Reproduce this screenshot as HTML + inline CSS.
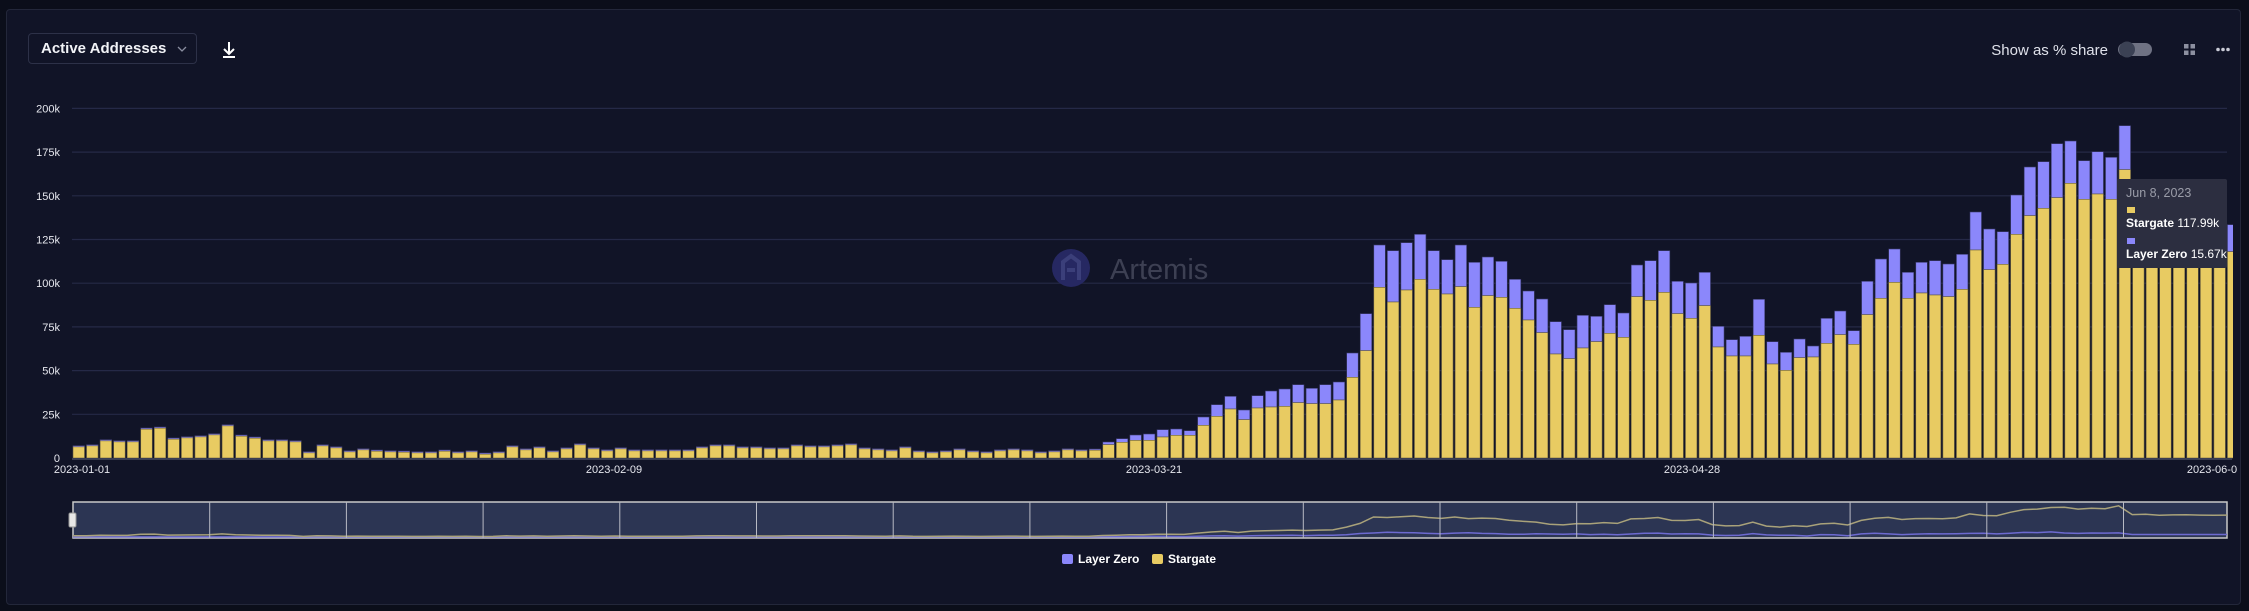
<!DOCTYPE html>
<html><head><meta charset="utf-8">
<style>
html,body{margin:0;padding:0;background:#0b0e1a;width:2249px;height:611px;overflow:hidden;font-family:"Liberation Sans",sans-serif;}
#panel{position:absolute;left:6px;top:9px;width:2233px;height:594px;background:#111427;border:1px solid #23273a;border-radius:4px;}
.dd{position:absolute;left:28px;top:33px;width:169px;height:31px;border:1px solid #2d3148;border-radius:4px;box-sizing:border-box;}
.dd span{position:absolute;left:12px;top:6px;color:#f2f3f7;font-size:15px;font-weight:bold;}
svg{position:absolute;left:0;top:0;}
</style></head><body>
<div id="panel"></div>
<div class="dd"><span>Active Addresses</span></div>
<svg id="s" width="2249" height="611" xmlns="http://www.w3.org/2000/svg">
<path d="M178 47 L182 51 L186 47" stroke="#8a8ea0" stroke-width="1.3" fill="none"/>
<path d="M229 42 V54 M224 49 L229 54 L234 49" stroke="#fff" stroke-width="2" fill="none"/>
<rect x="223" y="56" width="12" height="2" fill="#fff"/>
<text x="2108" y="55" fill="#dfe1ea" font-size="15" text-anchor="end" font-family="Liberation Sans, sans-serif">Show as % share</text>
<rect x="2118" y="43" width="34" height="13" rx="6.5" fill="#6f7283"/>
<circle cx="2127" cy="49.5" r="8" fill="#3b4154"/>
<g fill="#8d90a0"><rect x="2184" y="44" width="4.5" height="4.5"/><rect x="2190.5" y="44" width="4.5" height="4.5"/><rect x="2184" y="50.5" width="4.5" height="4.5"/><rect x="2190.5" y="50.5" width="4.5" height="4.5"/></g>
<g fill="#c9cbd6"><circle cx="2218" cy="49.5" r="1.8"/><circle cx="2223" cy="49.5" r="1.8"/><circle cx="2228" cy="49.5" r="1.8"/></g>
<g id="grid"></g>
<circle cx="1071" cy="268" r="19" fill="#262862"/>
<path d="M1063 280 V262 L1071 256 L1079 262 V280 M1067 270 H1075" stroke="#3b3f7a" stroke-width="4" fill="none"/>
<text x="1110" y="279" fill="#3d4053" font-size="29" font-family="Liberation Sans, sans-serif">Artemis</text>
<g id="bars"></g>
<g id="axes"></g>
<rect x="73" y="502" width="2154" height="36" fill="#2c3553" stroke="#c9c9c9" stroke-width="1.5"/>
<g id="nav"></g>
<rect x="69" y="513" width="7" height="14" rx="1.5" fill="#e8e8e8" stroke="#999"/>
<rect x="1062" y="554" width="11" height="10" rx="2" fill="#8b87fb"/>
<text x="1078" y="563" fill="#fff" font-size="12" font-weight="bold" font-family="Liberation Sans, sans-serif">Layer Zero</text>
<rect x="1152" y="554" width="11" height="10" rx="2" fill="#e8cb62"/>
<text x="1168" y="563" fill="#fff" font-size="12" font-weight="bold" font-family="Liberation Sans, sans-serif">Stargate</text>
<rect x="2117" y="179" width="110" height="89" rx="2" fill="#2c2e40"/>
<text x="2126" y="197" fill="#9a9ca8" font-size="12.5" font-family="Liberation Sans, sans-serif">Jun 8, 2023</text>
<rect x="2127" y="207" width="8" height="6" fill="#e8cb62"/>
<text x="2126" y="227" fill="#fff" font-size="12" font-family="Liberation Sans, sans-serif"><tspan font-weight="bold">Stargate</tspan> 117.99k</text>
<rect x="2127" y="238" width="8" height="6" fill="#8b87fb"/>
<text x="2126" y="258" fill="#fff" font-size="12" font-family="Liberation Sans, sans-serif"><tspan font-weight="bold">Layer Zero</tspan> 15.67k</text>
</svg>
<script>
var NS="http://www.w3.org/2000/svg";
function el(t,a,p){var e=document.createElementNS(NS,t);for(var k in a)e.setAttribute(k,a[k]);p.appendChild(e);return e;}
var base=458;
var grid=document.getElementById('grid'),axes=document.getElementById('axes');
var labs=['0','25k','50k','75k','100k','125k','150k','175k','200k'];
for(var i=0;i<=8;i++){var y=base-i*43.7;
 if(i>0)el('line',{x1:72,x2:2227,y1:y,y2:y,stroke:'#252947','stroke-width':1.2},grid);
 var t=el('text',{x:60,y:y+4,fill:'#e6e7ee','font-size':11,'text-anchor':'end','font-family':'Liberation Sans, sans-serif'},axes);t.textContent=labs[i];}
el('line',{x1:72,x2:2232,y1:base+1,y2:base+1,stroke:'#3a3e52','stroke-width':2},axes);
var xl=[['2023-01-01',82],['2023-02-09',614],['2023-03-21',1154],['2023-04-28',1692],['2023-06-0',2212]];
xl.forEach(function(a){var t=el('text',{x:a[1],y:473,fill:'#e6e7ee','font-size':11,'text-anchor':'middle','font-family':'Liberation Sans, sans-serif'},axes);t.textContent=a[0];});
var d=[];
var z4=[198,195,180,183,183,145,142,175,171,168,162,135,166,172,180,180,183,216,195,201,213,207,211,213,214,216,216,211,216,213,220,216,198,207,201,213,204,192,204,210,204,210,210,210,210,210,201,195,195,201,201,204,204,195,198,198,195,192,204,207,210,201,213,216,213,207,213,216,210,207,210,216,213,207,210,208];
z4.forEach(function(t){var h=(235-t)/3;d.push([h,Math.max(0,h-1.2)]);});
var z5=[[727,735],[717,728],[706,722],[703,722],[690,712],[688,707],[693,707],[652,677],[615,650],[590,628],[631,660],[588,625],[574,622],[568,620],[555,609],[566,612],[555,612],[547,601],[460,533],[342,453],[136,263],[153,307],[129,271],[104,239],[153,269],[180,283],[136,261],[188,323],[172,288],[185,293],[239,326],[274,361],[298,399],[366,463],[390,477],[347,445],[350,426],[315,401],[340,413],[196,291]];
z5.forEach(function(p){d.push([(775-p[0])/3,(775-p[1])/3]);});
var z6=[[453,572],[423,548],[515,612],[520,626],[488,588],[650,712],[690,739],[680,739],[569,677],[696,763],[728,782],[688,744],[709,742],[626,701],[604,675],[663,704],[515,615],[448,566],[418,518],[488,566],[458,550],[453,556],[463,561],[434,539],[307,421],[358,480],[366,464],[256,374],[172,318],[156,296],[102,264],[94,221],[153,269],[126,253],[143,269],[48,180],[330,410],[320,400],[350,430],[340,420],[335,415],[345,425],[350,430],[345,426]];
z6.forEach(function(p){d.push([(1045-p[0])/3,(1045-p[1])/3]);});
var bars=document.getElementById('bars'),bw=13.55;
var clip=el('clipPath',{id:'cp'},bars);el('rect',{x:70,y:0,width:2163,height:611},clip);
var g=el('g',{'clip-path':'url(#cp)'},bars);
d.forEach(function(v,i){var x=73+i*bw,w=11.5;
 el('rect',{x:x,y:base-v[0],width:w,height:v[0]-v[1],fill:'#8b87fb',stroke:'#3a3a6a','stroke-width':0.6},g);
 el('rect',{x:x,y:base-v[1],width:w,height:v[1],fill:'#e8cb62',stroke:'#6b6040','stroke-width':0.6},g);});
var nav=document.getElementById('nav'),k=0.094,py='',pp='';
d.forEach(function(v,i){var x=73+i*2154/(d.length-1);py+=(i?'L':'M')+x.toFixed(1)+' '+(537-v[0]*k).toFixed(1);pp+=(i?'L':'M')+x.toFixed(1)+' '+(537-(v[0]-v[1])*k).toFixed(1);});
el('path',{d:pp,stroke:'#6d6ad0','stroke-width':1.5,fill:'none'},nav);
el('path',{d:py,stroke:'#a9a27a','stroke-width':1.5,fill:'none'},nav);
for(var j=1;j<16;j++){var x=73+j*136.7;if(x<2227)el('line',{x1:x,x2:x,y1:502,y2:538,stroke:'#b8bac4','stroke-width':1},nav);}
</script>
</body></html>
